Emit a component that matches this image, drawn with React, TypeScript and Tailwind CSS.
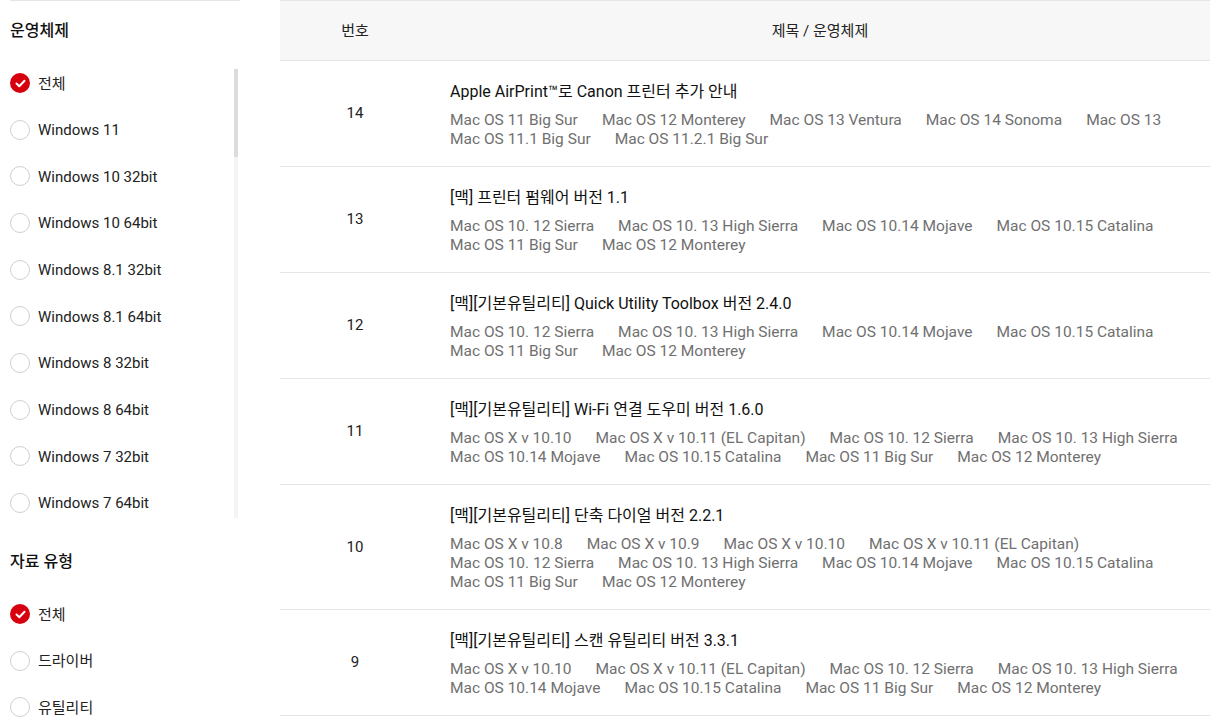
import React from "react";

type Post = { no: number; title: string; os: string[] };

const osList = [
  "전체",
  "Windows 11",
  "Windows 10 32bit",
  "Windows 10 64bit",
  "Windows 8.1 32bit",
  "Windows 8.1 64bit",
  "Windows 8 32bit",
  "Windows 8 64bit",
  "Windows 7 32bit",
  "Windows 7 64bit",
  "Windows Vista 32bit",
  "Windows Vista 64bit",
];

const typeList = ["전체", "드라이버", "유틸리티"];

const posts: Post[] = [
  {
    no: 14,
    title: "Apple AirPrint™로 Canon 프린터 추가 안내",
    os: ["Mac OS 11 Big Sur", "Mac OS 12 Monterey", "Mac OS 13 Ventura", "Mac OS 14 Sonoma", "Mac OS 13", "Mac OS 11.1 Big Sur", "Mac OS 11.2.1 Big Sur"],
  },
  {
    no: 13,
    title: "[맥] 프린터 펌웨어 버전 1.1",
    os: ["Mac OS 10. 12 Sierra", "Mac OS 10. 13 High Sierra", "Mac OS 10.14 Mojave", "Mac OS 10.15 Catalina", "Mac OS 11 Big Sur", "Mac OS 12 Monterey"],
  },
  {
    no: 12,
    title: "[맥][기본유틸리티] Quick Utility Toolbox 버전 2.4.0",
    os: ["Mac OS 10. 12 Sierra", "Mac OS 10. 13 High Sierra", "Mac OS 10.14 Mojave", "Mac OS 10.15 Catalina", "Mac OS 11 Big Sur", "Mac OS 12 Monterey"],
  },
  {
    no: 11,
    title: "[맥][기본유틸리티] Wi-Fi 연결 도우미 버전 1.6.0",
    os: ["Mac OS X v 10.10", "Mac OS X v 10.11 (EL Capitan)", "Mac OS 10. 12 Sierra", "Mac OS 10. 13 High Sierra", "Mac OS 10.14 Mojave", "Mac OS 10.15 Catalina", "Mac OS 11 Big Sur", "Mac OS 12 Monterey"],
  },
  {
    no: 10,
    title: "[맥][기본유틸리티] 단축 다이얼 버전 2.2.1",
    os: ["Mac OS X v 10.8", "Mac OS X v 10.9", "Mac OS X v 10.10", "Mac OS X v 10.11 (EL Capitan)", "Mac OS 10. 12 Sierra", "Mac OS 10. 13 High Sierra", "Mac OS 10.14 Mojave", "Mac OS 10.15 Catalina", "Mac OS 11 Big Sur", "Mac OS 12 Monterey"],
  },
  {
    no: 9,
    title: "[맥][기본유틸리티] 스캔 유틸리티 버전 3.3.1",
    os: ["Mac OS X v 10.10", "Mac OS X v 10.11 (EL Capitan)", "Mac OS 10. 12 Sierra", "Mac OS 10. 13 High Sierra", "Mac OS 10.14 Mojave", "Mac OS 10.15 Catalina", "Mac OS 11 Big Sur", "Mac OS 12 Monterey"],
  },
  {
    no: 8,
    title: "[맥][기본유틸리티] 프린터 드라이버 버전 5.0",
    os: ["Mac OS 10.14 Mojave", "Mac OS 10.15 Catalina"],
  },
];

function Radio({ label, checked }: { label: string; checked?: boolean }) {
  return (
    <div className="flex items-center h-[20px] gap-[8px]">
      {checked ? (
        <span className="w-[20px] h-[20px] rounded-full bg-[#d7000f] flex items-center justify-center shrink-0">
          <svg width="11" height="9" viewBox="0 0 11 9" fill="none">
            <path d="M1.5 4.5 L4.3 7.2 L9.5 1.8" stroke="#fff" strokeWidth="2" strokeLinecap="round" strokeLinejoin="round" />
          </svg>
        </span>
      ) : (
        <span className="w-[20px] h-[20px] rounded-full border border-[#cfcfcf] bg-white shrink-0" />
      )}
      <span className="text-[15px] leading-[20px] text-[#222] whitespace-nowrap pt-[1px]">{label}</span>
    </div>
  );
}

export default function App() {
  return (
    <div className="w-[1214px] h-[722px] overflow-hidden bg-white flex font-['Roboto','Noto_Sans_CJK_KR',sans-serif]">
      <aside className="w-[230px] ml-[10px] shrink-0 border-t border-[#e5e5e5]">
        <h3 className="text-[16px] leading-[22px] font-medium text-[#111] pt-[19px] pb-[27px]">운영체제</h3>
        <div className="flex h-[449px]">
          <div className="flex-1 overflow-hidden pt-[4px] flex flex-col gap-[26.67px]">
            {osList.map((o, i) => (
              <Radio key={o + i} label={o} checked={i === 0} />
            ))}
          </div>
          <div className="w-[4px] mr-[2px] bg-[#f4f4f4] flex flex-col">
            <div className="h-[88px] bg-[#dcdcdc]" />
          </div>
        </div>
        <h3 className="text-[16px] leading-[22px] font-medium text-[#111] pt-[33px] pb-[31px]">자료 유형</h3>
        <div className="flex flex-col gap-[26.67px]">
          {typeList.map((o, i) => (
            <Radio key={o} label={o} checked={i === 0} />
          ))}
        </div>
      </aside>

      <main className="ml-[40px] w-[930px] shrink-0">
        <div className="flex h-[61px] bg-[#f7f7f7] border-y border-[#e5e5e5] text-[15px] text-[#222]">
          <div className="w-[150px] flex items-center justify-center pt-[1px]">번호</div>
          <div className="flex-1 flex items-center justify-center pt-[1px]">제목 / 운영체제</div>
        </div>
        {posts.map((p) => (
          <div key={p.no} className="flex border-b border-[#e5e5e5]">
            <div className="w-[150px] shrink-0 flex items-center justify-center text-[15px] text-[#222]">{p.no}</div>
            <div className="flex-1 pl-[20px] pr-[20px] pt-[20px] pb-[17px]">
              <div className="text-[16px] leading-[22px] text-[#111]">{p.title}</div>
              <div className="mt-[8px] flex flex-wrap gap-x-[24px] text-[15.5px] leading-[19px] text-[#707070]">
                {p.os.map((o, i) => (
                  <span key={o + i} className="whitespace-nowrap">{o}</span>
                ))}
              </div>
            </div>
          </div>
        ))}
      </main>
    </div>
  );
}
